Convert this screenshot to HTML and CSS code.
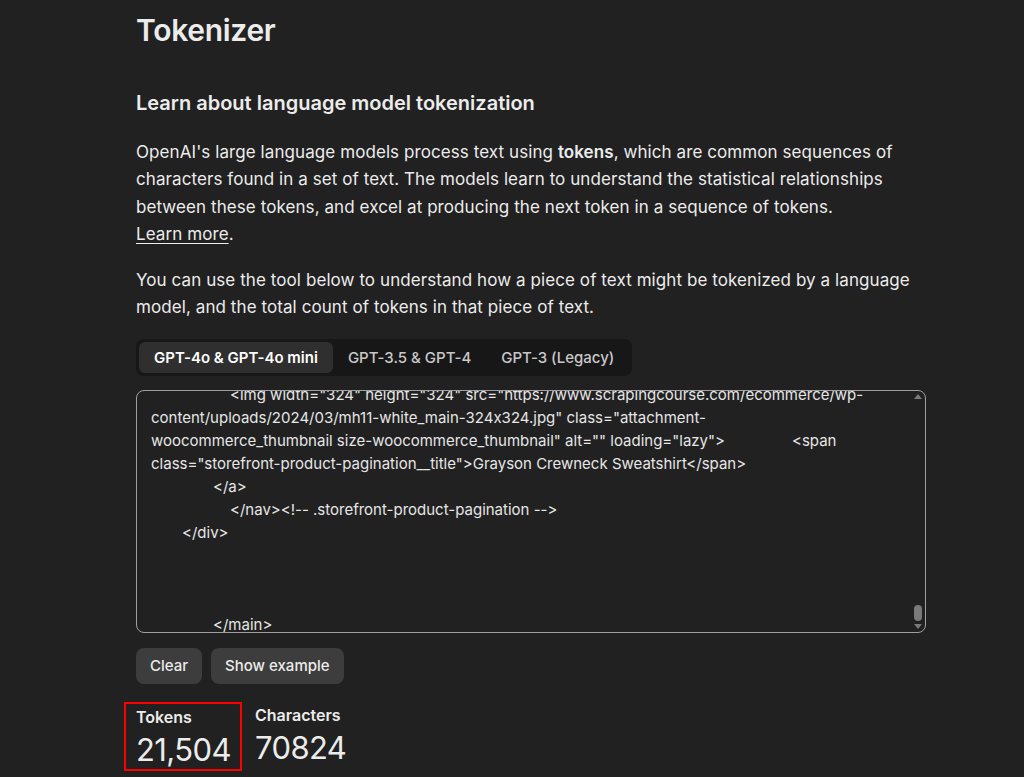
FILE: index.html
```html
<!DOCTYPE html>
<html lang="en">
<head>
    <meta charset="UTF-8">
    <meta name="viewport" content="width=device-width, initial-scale=1.0">
    <title>Tokenizer</title>
    <link rel="stylesheet" href="styles.css">
</head>
<body>

    <div class="container">
        <!-- Page Title -->
        <h1>Tokenizer</h1>

        <h2>Learn about language model tokenization</h2>

        <p>OpenAI's large language models process text using <strong>tokens</strong>, which are common sequences of characters found in a set of text. The models learn to understand the statistical relationships between these tokens, and excel at producing the next token in a sequence of tokens. <a href="#">Learn more</a>.</p>

        <p>You can use the tool below to understand how a piece of text might be tokenized by a language model, and the total count of tokens in that piece of text.</p>

        <!-- Model Tabs -->
        <div class="tabs">
            <button class="tab active">GPT-4o &amp; GPT-4o mini</button>
            <button class="tab">GPT-3.5 &amp; GPT-4</button>
            <button class="tab">GPT-3 (Legacy)</button>
        </div>

        <!-- Text Input -->
        <div class="editor">
            <div class="editor-text">
                <div class="line ind-4">&lt;img width="324" height="324" src="https://www.scrapingcourse.com/ecommerce/wp-</div>
                <div class="line">content/uploads/2024/03/mh11-white_main-324x324.jpg" class="attachment-</div>
                <div class="line">woocommerce_thumbnail size-woocommerce_thumbnail" alt="" loading="lazy"&gt;<span class="gap">&lt;span</span></div>
                <div class="line">class="storefront-product-pagination__title"&gt;Grayson Crewneck Sweatshirt&lt;/span&gt;</div>
                <div class="line ind-3">&lt;/a&gt;</div>
                <div class="line ind-4">&lt;/nav&gt;&lt;!-- .storefront-product-pagination --&gt;</div>
                <div class="line ind-2">&lt;/div&gt;</div>
                <div class="line"></div>
                <div class="line"></div>
                <div class="line"></div>
                <div class="line ind-3">&lt;/main&gt;</div>
            </div>
            <div class="scroll-up"></div>
            <div class="scroll-thumb"></div>
            <div class="scroll-down"></div>
        </div>

        <!-- Actions -->
        <div class="actions">
            <button class="btn">Clear</button>
            <button class="btn">Show example</button>
        </div>

        <!-- Stats -->
        <div class="stats">
            <div class="stat highlight">
                <div class="stat-label">Tokens</div>
                <div class="stat-value">21,504</div>
            </div>
            <div class="stat">
                <div class="stat-label">Characters</div>
                <div class="stat-value">70824</div>
            </div>
        </div>
    </div>

</body>
</html>
```

FILE: styles.css
```css
body {
    font-family: 'Inter', 'Noto Sans', sans-serif;
    font-feature-settings: "calt" 0;
    background-color: #212121;
    color: #ececec;
    margin: 0;
}
.container {
    width: 790px;
    margin-left: 136px;
}
h1 {
    font-size: 30px;
    font-weight: 600;
    margin: 11px 0 0;
    line-height: 38px;
    letter-spacing: -0.3px;
}
h2 {
    font-size: 20px;
    font-weight: 600;
    margin: 40px 0 0;
    line-height: 28px;
}
p {
    font-size: 17px;
    line-height: 27.3px;
    margin: 22px 0 0;
    letter-spacing: 0.08px;
}
p + p {
    margin-top: 19px;
}
p a {
    color: #ececec;
    text-decoration: underline;
    text-underline-offset: 3px;
    white-space: nowrap;
}
strong {
    font-weight: 600;
}

/* Tabs */
.tabs {
    display: inline-flex;
    background-color: #171717;
    border-radius: 8px;
    padding: 3px;
    margin-top: 17px;
}
.tab {
    font-family: inherit;
    font-feature-settings: "calt" 0;
    font-size: 15px;
    font-weight: 500;
    color: #c8c8c8;
    background: none;
    border: none;
    border-radius: 6px;
    padding: 0 15px;
    height: 31px;
    cursor: pointer;
}
.tab.active {
    background-color: #2f2f2f;
    color: #ffffff;
    font-weight: 600;
}

/* Editor */
.editor {
    position: relative;
    margin-top: 14px;
    height: 241px;
    border: 1px solid #a0a0a0;
    border-radius: 8px;
    overflow: hidden;
}
.editor-text {
    margin-top: -8px;
    padding: 0 14px;
    font-size: 15px;
    line-height: 23px;
    color: #e6e6e6;
}
.line {
    height: 23px;
    white-space: nowrap;
}
.ind-2 { padding-left: 31px; }
.ind-3 { padding-left: 62px; }
.ind-4 { padding-left: 79px; }
.gap {
    margin-left: 67px;
}
.scroll-up,
.scroll-down {
    position: absolute;
    right: 3px;
    width: 0;
    height: 0;
    border-left: 4px solid transparent;
    border-right: 4px solid transparent;
}
.scroll-up {
    top: 3px;
    border-bottom: 5px solid #7a7a7a;
}
.scroll-down {
    bottom: 3px;
    border-top: 5px solid #7a7a7a;
}
.scroll-thumb {
    position: absolute;
    right: 3px;
    bottom: 11px;
    width: 8px;
    height: 16px;
    border-radius: 4px;
    background-color: #7a7a7a;
}

/* Buttons */
.actions {
    display: flex;
    gap: 9px;
    margin-top: 15px;
}
.btn {
    font-family: inherit;
    font-size: 15px;
    font-weight: 500;
    color: #ececec;
    background-color: #3d3d3d;
    border: none;
    border-radius: 8px;
    height: 36px;
    padding: 0 14px;
    cursor: pointer;
}

/* Stats */
.stats {
    display: flex;
    margin-top: 18px;
    margin-left: -12px;
}
.stat {
    padding: 2px 10px 0 13px;
}
.stat.highlight {
    border: 2px solid #ff0000;
    padding: 2px 10px 0 10px;
    width: 94px;
    height: 63px;
}
.stat-label {
    font-size: 16px;
    font-weight: 600;
    line-height: 22px;
}
.stat-value {
    font-size: 31px;
    line-height: 40px;
    margin-top: 2px;
    font-weight: 400;
    letter-spacing: -0.6px;
}
```
